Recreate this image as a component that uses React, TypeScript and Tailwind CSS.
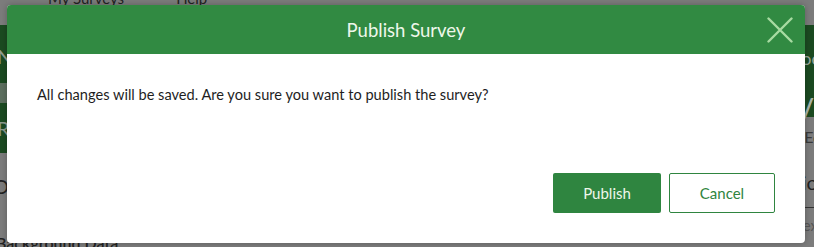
function Backdrop() {
  return (
    <div className="flex h-[247px] w-[814px] flex-col bg-[#7c7c7c] text-[#222]">
      <div className="flex h-[25px] shrink-0 items-start gap-[52px] pl-[48px] text-[15px] leading-none">
        <span className="-mt-[9px]">My Surveys</span>
        <span className="-mt-[9px]">Help</span>
      </div>
      <div className="flex flex-1">
        <div className="flex w-[407px] flex-col">
          <div className="flex h-[58px] items-center bg-[#1b4a21] pt-[4px] text-[#8f9c90]">
            <span className="-ml-[3px] text-[20px]">N</span>
          </div>
          <div className="h-[20px] bg-[#5d6f5f]" />
          <div className="flex h-[50px] items-center bg-[#1b4a21] text-[#8d9a8e]">
            <span className="-ml-[3px] text-[20px]">R</span>
          </div>
          <div className="flex flex-1 flex-col justify-between">
            <span className="-ml-[7px] pt-[18px] text-[20px]">O</span>
            <span className="-mb-[8px] -ml-[4px] text-[16px] font-semibold">Background Data</span>
          </div>
        </div>
        <div className="flex flex-1 flex-col items-end">
          <div className="flex h-[92px] w-full flex-col items-end justify-between bg-[#1b4a21] pt-[20px] text-[#9aa59a]">
            <span className="-mr-[6px] text-[18px]">oc</span>
            <span className="-mb-[4px] text-[26px] font-bold leading-none text-[#a9b4aa]">/</span>
          </div>
          <span className="-mr-[8px] pt-[8px] text-[16px] text-[#3a3a3a]">Ed</span>
          <span className="-mr-[2px] pt-[18px] text-[20px]">ic</span>
          <div className="mt-[10px] w-full border-b border-[#333]" />
          <span className="-mr-[4px] pt-[6px] text-[15px] text-[#555]">ex</span>
        </div>
      </div>
    </div>
  );
}

export default function App() {
  return (
    <div className="relative h-[247px] w-[814px] overflow-hidden font-['Lato',sans-serif]">
      <Backdrop />
      <div className="absolute left-[7px] top-[5px] flex h-[238px] w-[798px] flex-col overflow-hidden rounded-[4px] bg-white shadow-[0_0_6px_rgba(0,0,0,0.25)]">
        <div className="relative flex h-[49px] shrink-0 items-center justify-center bg-[#318a42]">
          <h2 className="pt-[2px] text-[18.5px] text-[#eef7ea]">Publish Survey</h2>
          <button className="absolute right-[12px] top-[12px] text-[#a8dba2]" aria-label="Close">
            <svg width="26" height="26" viewBox="0 0 26 26" fill="none" stroke="currentColor" strokeWidth="2.4" strokeLinecap="round">
              <path d="M1.5 1.5 24.5 24.5M24.5 1.5 1.5 24.5" />
            </svg>
          </button>
        </div>
        <div className="flex flex-1 flex-col px-[30px]">
          <p className="pt-[30px] text-[14.6px] text-[#1e1e1e]">
            All changes will be saved. Are you sure you want to publish the survey?
          </p>
          <div className="mt-auto flex justify-end gap-[8px] pb-[30px]">
            <button className="h-[40px] w-[108px] rounded-[2px] bg-[#2f8540] text-[15px] text-[#eef7ea]">
              Publish
            </button>
            <button className="h-[40px] w-[106px] rounded-[2px] border border-[#2f8540] bg-white text-[15px] text-[#2f8540]">
              Cancel
            </button>
          </div>
        </div>
      </div>
    </div>
  );
}
